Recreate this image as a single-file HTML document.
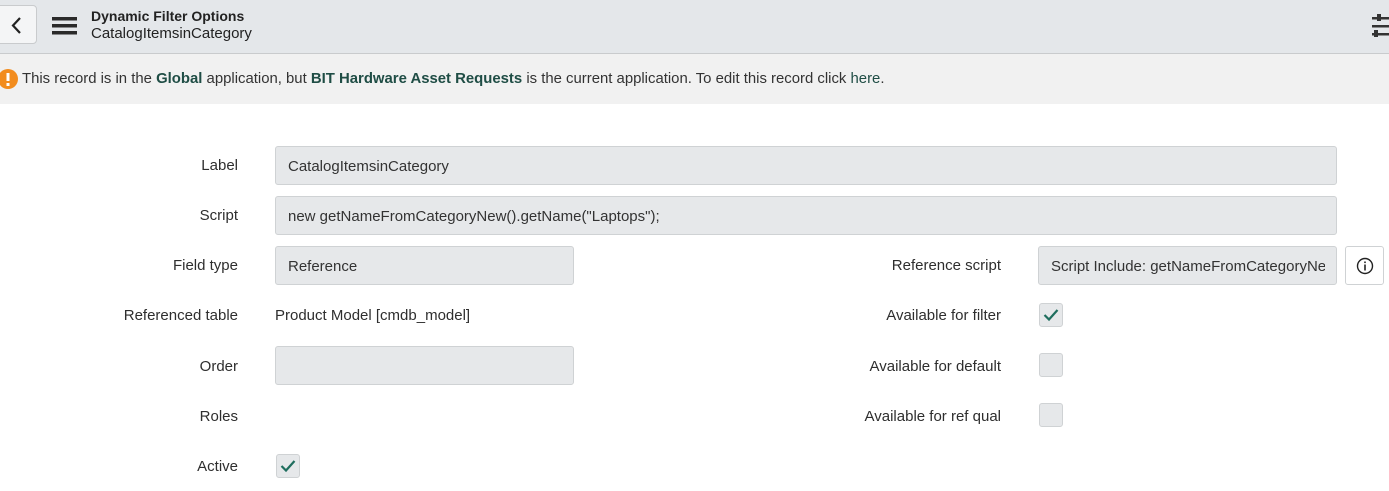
<!DOCTYPE html>
<html><head><meta charset="utf-8"><style>
body{margin:0;width:1389px;height:491px;overflow:hidden;background:#fff;font-family:"Liberation Sans",sans-serif;color:#2e2e2e;position:relative}
.a{position:absolute}
.hdr{left:0;top:0;width:1389px;height:53px;background:#e4e7ea;border-bottom:1px solid #c9cbcd}
.ban{left:0;top:54px;width:1389px;height:50px;background:#f1f1f1}
.lbl{font-size:15px;text-align:right;width:240px;line-height:20px}
.inp{background:#e6e8ea;border:1px solid #cfd2d4;border-radius:3px;box-sizing:border-box;height:39px;font-size:15px;line-height:39px;padding-left:12px;padding-right:11px;color:#333;white-space:nowrap;overflow:hidden}
.inp span{display:block;overflow:hidden}
.cb{width:24px;height:24px;box-sizing:border-box;border:1px solid #cfd2d4;border-radius:3px;background:#e6e8ea}
b{color:#1f4d45;font-weight:bold}
</style></head><body>
<div class="a hdr"></div>
<div class="a" style="left:-4px;top:5px;width:41px;height:39px;border:1px solid #c9cbcd;border-radius:4px;background:#f4f5f6;box-sizing:border-box"></div>
<svg class="a" style="left:10px;top:16px" width="14" height="20"><path d="M10 2 L3 9.5 L10 17" stroke="#222" stroke-width="2.2" fill="none"/></svg>
<svg class="a" style="left:52px;top:16px" width="26" height="20"><rect x="0" y="1" width="25" height="3.5" fill="#2a2a2a"/><rect x="0" y="8" width="25" height="3.5" fill="#2a2a2a"/><rect x="0" y="15" width="25" height="3.5" fill="#2a2a2a"/></svg>
<div class="a" style="left:91px;top:8px;font-size:14px;font-weight:bold;color:#222">Dynamic Filter Options</div>
<div class="a" style="left:91px;top:25px;font-size:15px;color:#222">CatalogItemsinCategory</div>
<svg class="a" style="left:1372px;top:12px" width="17" height="28"><rect x="0" y="5" width="17" height="2.5" fill="#333"/><rect x="5" y="2" width="4" height="7" fill="#333"/><rect x="0" y="13" width="17" height="2.5" fill="#333"/><rect x="0" y="21" width="17" height="2.5" fill="#333"/><rect x="2" y="18" width="4" height="7" fill="#333"/></svg>
<div class="a ban"></div>
<svg class="a" style="left:-2px;top:68px" width="22" height="22"><circle cx="10" cy="11" r="10" fill="#f28c1e"/><rect x="8.5" y="5" width="3" height="8" fill="#fff"/><rect x="8.5" y="15" width="3" height="3" fill="#fff"/></svg>
<div class="a" style="left:22px;top:71px;font-size:14.9px;color:#333;white-space:nowrap">This record is in the <b>Global</b> application, but <b>BIT Hardware Asset Requests</b> is the current application. To edit this record click <span style="color:#1f4d45">here</span>.</div>

<div class="a lbl" style="left:-2px;top:156px">Label</div>
<div class="a inp" style="left:275px;top:146px;width:1062px">CatalogItemsinCategory</div>
<div class="a lbl" style="left:-2px;top:206px">Script</div>
<div class="a inp" style="left:275px;top:196px;width:1062px">new getNameFromCategoryNew().getName("Laptops");</div>
<div class="a lbl" style="left:-2px;top:256px">Field type</div>
<div class="a inp" style="left:275px;top:246px;width:299px">Reference</div>
<div class="a lbl" style="left:-2px;top:306px">Referenced table</div>
<div class="a" style="left:275px;top:306px;font-size:15px;line-height:20px">Product Model [cmdb_model]</div>
<div class="a lbl" style="left:-2px;top:357px">Order</div>
<div class="a inp" style="left:275px;top:346px;width:299px"></div>
<div class="a lbl" style="left:-2px;top:407px">Roles</div>
<div class="a lbl" style="left:-2px;top:457px">Active</div>
<div class="a cb" style="left:276px;top:454px"></div>
<svg class="a" style="left:280px;top:459px" width="16" height="14"><path d="M1.5 7 L6 11.5 L14.5 2" stroke="#1f6e5e" stroke-width="2.2" fill="none"/></svg>

<div class="a lbl" style="left:761px;top:256px">Reference script</div>
<div class="a inp" style="left:1038px;top:246px;width:299px"><span>Script Include: getNameFromCategoryNew</span></div>
<div class="a" style="left:1345px;top:246px;width:39px;height:39px;border:1px solid #cfd2d4;border-radius:3px;box-sizing:border-box;background:#fff"></div>
<svg class="a" style="left:1355px;top:256px" width="20" height="20"><circle cx="10" cy="10" r="7.5" stroke="#222" stroke-width="1.4" fill="none"/><rect x="9.2" y="8.5" width="1.6" height="6" fill="#222"/><rect x="9.2" y="5.5" width="1.6" height="1.6" fill="#222"/></svg>
<div class="a lbl" style="left:761px;top:306px">Available for filter</div>
<div class="a cb" style="left:1039px;top:303px"></div>
<svg class="a" style="left:1043px;top:308px" width="16" height="14"><path d="M1.5 7 L6 11.5 L14.5 2" stroke="#1f6e5e" stroke-width="2.2" fill="none"/></svg>
<div class="a lbl" style="left:761px;top:357px">Available for default</div>
<div class="a cb" style="left:1039px;top:353px"></div>
<div class="a lbl" style="left:761px;top:407px">Available for ref qual</div>
<div class="a cb" style="left:1039px;top:403px"></div>
</body></html>
